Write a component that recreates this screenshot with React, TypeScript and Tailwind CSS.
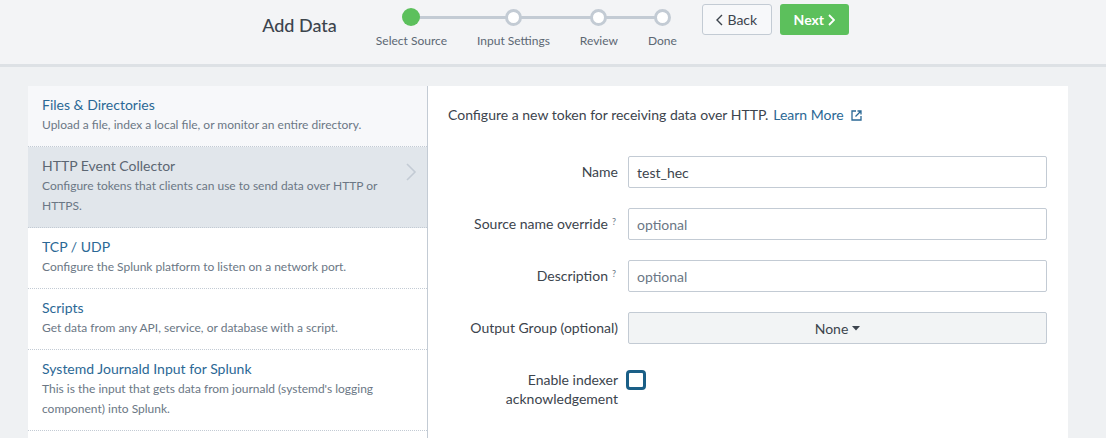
import React from "react";

const font = { fontFamily: "Lato, 'Open Sans', Arial, sans-serif" };

function Step({ label, first, last, active }: { label: string; first?: boolean; last?: boolean; active?: boolean }) {
  return (
    <div className="flex flex-col items-center">
      <div className="relative flex h-[18px] w-full items-center justify-center">
        {!first && <div className="absolute left-0 right-1/2 top-[8px] h-[3px] bg-[#c3cbd4]" />}
        {!last && <div className="absolute left-1/2 right-0 top-[8px] h-[3px] bg-[#c3cbd4]" />}
        {active ? (
          <div className="relative h-[18px] w-[18px] rounded-full bg-[#5cc05c]" />
        ) : (
          <div className="relative h-[17px] w-[17px] rounded-full border-[3px] border-[#c3cbd4] bg-white" />
        )}
      </div>
      <div className="mt-[8px] whitespace-nowrap px-[15px] text-[12px] leading-[14px] text-[#5c6773]">{label}</div>
    </div>
  );
}

function Item({
  title,
  desc,
  selected,
  bg,
}: {
  title: string;
  desc: React.ReactNode;
  selected?: boolean;
  bg?: string;
}) {
  return (
    <div
      className={
        "relative border-b border-dotted border-[#c3cbd4] pb-[11px] pl-[14px] pr-[36px] pt-[9px] " +
        (selected ? "bg-[#e1e6eb]" : bg === "light" ? "bg-[#f7f8fa]" : "bg-white")
      }
    >
      <div className={"text-[14px] leading-[20px] " + (selected ? "text-[#5c6773]" : "text-[#2b6895]")}>{title}</div>
      <div className="text-[12px] leading-[20px] text-[#6b7785]">{desc}</div>
      {selected && (
        <svg className="absolute right-[10px] top-[16px]" width="12" height="18" viewBox="0 0 12 18">
          <polyline points="2,1 10,9 2,17" fill="none" stroke="#c3cbd4" strokeWidth="1.6" />
        </svg>
      )}
    </div>
  );
}

function Label({ children, q }: { children: React.ReactNode; q?: boolean }) {
  return (
    <div className="w-[170px] shrink-0 text-right text-[14px] leading-[20px] text-[#3c444d]">
      {children}
      {q && <sup className="ml-[4px] mr-[2px] text-[9px] text-[#6b7785]">?</sup>}
    </div>
  );
}

export default function App() {
  return (
    <div className="h-[438px] w-[1106px] overflow-hidden bg-[#eff1f3]" style={font}>
      {/* Header */}
      <div className="h-[67px] border-b-[3px] border-[#dde1e5] bg-[#f3f4f6]">
        <div className="flex items-start justify-center pl-[5px]">
          <div className="mt-[14px] text-[18px] font-medium leading-[22px] text-[#3c444d]">Add Data</div>
          <div className="ml-[24px] mt-[8px] flex">
            <Step label="Select Source" first active />
            <Step label="Input Settings" />
            <Step label="Review" />
            <Step label="Done" last />
          </div>
          <div className="ml-[10px] mt-[4px] flex gap-[8px]">
            <button className="flex h-[31px] w-[70px] items-center justify-center gap-[4px] rounded-[3px] border border-[#c3cbd4] bg-[#f7f8fa] text-[14px] text-[#3c444d]">
              <svg width="7" height="12" viewBox="0 0 7 12">
                <polyline points="6,1 1,6 6,11" fill="none" stroke="#3c444d" strokeWidth="1.4" />
              </svg>
              Back
            </button>
            <button className="flex h-[31px] w-[69px] items-center justify-center gap-[4px] rounded-[3px] bg-[#5cc05c] text-[14px] font-bold text-white">
              Next
              <svg width="7" height="12" viewBox="0 0 7 12">
                <polyline points="1,1 6,6 1,11" fill="none" stroke="#ffffff" strokeWidth="1.8" />
              </svg>
            </button>
          </div>
        </div>
      </div>

      {/* Card */}
      <div className="ml-[28px] mt-[19px] flex w-[1040px] bg-white">
        <div className="w-[400px] shrink-0 border-r border-[#c3cbd4]">
          <Item bg="light" title="Files & Directories" desc="Upload a file, index a local file, or monitor an entire directory." />
          <Item
            selected
            title="HTTP Event Collector"
            desc="Configure tokens that clients can use to send data over HTTP or HTTPS."
          />
          <Item title="TCP / UDP" desc="Configure the Splunk platform to listen on a network port." />
          <Item title="Scripts" desc="Get data from any API, service, or database with a script." />
          <Item
            title="Systemd Journald Input for Splunk"
            desc="This is the input that gets data from journald (systemd's logging component) into Splunk."
          />
          <div className="h-[20px]" />
        </div>

        <div className="flex-1 pl-[20px] pr-[20px] pt-[19px]">
          <div className="flex items-center text-[14px] leading-[20px] text-[#3c444d]">
            Configure a new token for receiving data over HTTP.
            <span className="ml-[5px] text-[#2b6895]">Learn More</span>
            <svg className="ml-[7px]" width="11" height="11" viewBox="0 0 11 11">
              <path d="M5 1H1V10H10V6" fill="none" stroke="#2b6895" strokeWidth="1.3" />
              <path d="M4.5 6.5L9.5 1.5M6.5 1H10V4.5" fill="none" stroke="#2b6895" strokeWidth="1.3" />
            </svg>
          </div>

          <div className="mt-[31px] flex flex-col gap-[20px]">
            <div className="flex items-center gap-[10px]">
              <Label>Name</Label>
              <div className="flex h-[32px] w-[419px] items-center rounded-[2px] border border-[#c3cbd4] bg-white px-[8px] text-[14px] text-[#3c444d]">
                test_hec
              </div>
            </div>
            <div className="flex items-center gap-[10px]">
              <Label q>Source name override</Label>
              <div className="flex h-[32px] w-[419px] items-center rounded-[2px] border border-[#c3cbd4] bg-white px-[8px] text-[14px] text-[#6b7785]">
                optional
              </div>
            </div>
            <div className="flex items-center gap-[10px]">
              <Label q>Description</Label>
              <div className="flex h-[32px] w-[419px] items-center rounded-[2px] border border-[#c3cbd4] bg-white px-[8px] text-[14px] text-[#6b7785]">
                optional
              </div>
            </div>
            <div className="flex items-center gap-[10px]">
              <Label>Output Group (optional)</Label>
              <div className="flex h-[32px] w-[419px] items-center justify-center gap-[4px] rounded-[2px] border border-[#c3cbd4] bg-[#f2f4f5] text-[14px] text-[#3c444d]">
                None
                <svg width="8" height="6" viewBox="0 0 8 6">
                  <polygon points="0,1 8,1 4,5.5" fill="#3c444d" />
                </svg>
              </div>
            </div>
            <div className="mt-[6px] flex items-start gap-[8px]">
              <div className="w-[170px] shrink-0 text-right text-[14px] leading-[19px] text-[#3c444d]">
                Enable indexer
                <br />
                acknowledgement
              </div>
              <div className="h-[20px] w-[20px] rounded-[4px] border-[3px] border-[#1a5f87] bg-white" />
            </div>
          </div>
        </div>
      </div>
    </div>
  );
}
